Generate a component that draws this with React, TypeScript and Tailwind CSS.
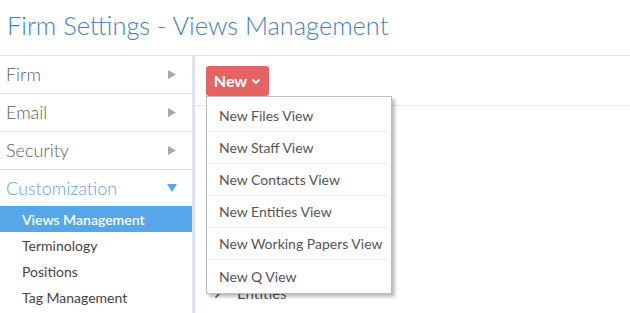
import React from "react";

const font = { fontFamily: "Lato, 'Open Sans', sans-serif" };

function TriRight() {
  return (
    <svg width="8" height="9" viewBox="0 0 8 9" className="shrink-0">
      <path d="M0 0 L8 4.5 L0 9 Z" fill="#a9a9a9" />
    </svg>
  );
}
function TriDown() {
  return (
    <svg width="10" height="8" viewBox="0 0 10 8" className="shrink-0">
      <path d="M0 0 L10 0 L5 8 Z" fill="#5aa7ea" />
    </svg>
  );
}

export default function App() {
  const top = ["Firm", "Email", "Security"];
  const sub = ["Terminology", "Positions", "Tag Management"];
  const menu = [
    "New Files View",
    "New Staff View",
    "New Contacts View",
    "New Entities View",
    "New Working Papers View",
    "New Q View",
  ];
  return (
    <div className="w-[630px] h-[313px] overflow-hidden bg-white flex flex-col" style={font}>
      <div className="h-[56px] shrink-0 border-b border-[#e2e5e9] flex items-center pl-[7px] pb-[4px]">
        <h1 className="text-[25.4px] font-light text-[#3f7fc6] leading-none">
          Firm Settings - Views Management
        </h1>
      </div>
      <div className="flex flex-1 min-h-0">
        <div className="w-[195px] shrink-0 border-r-[3px] border-[#dde4ec] flex flex-col">
          {top.map((t) => (
            <div
              key={t}
              className="h-[38px] border-b border-[#dfe3e8] flex items-center justify-between pl-[6px] pr-[16px]"
            >
              <span className="text-[18px] font-light text-[#5e5e5e]">{t}</span>
              <TriRight />
            </div>
          ))}
          <div className="h-[36px] flex items-center justify-between pl-[6px] pr-[15px]">
            <span className="text-[18px] font-light text-[#5aa3ea]">Customization</span>
            <TriDown />
          </div>
          <div className="h-[26px] bg-[#56a6e8] flex items-center pl-[22px]">
            <span className="text-[14px] font-semibold text-white">Views Management</span>
          </div>
          {sub.map((s) => (
            <div key={s} className="h-[26px] flex items-center pl-[22px]">
              <span className="text-[14px] text-[#444]">{s}</span>
            </div>
          ))}
        </div>
        <div className="flex-1 relative flex flex-col">
          <div className="h-[50px] border-b border-[#e8e8e8] pl-[11px] pt-[10px]">
            <button className="h-[30px] w-[63px] rounded-[3px] bg-[#e46464] text-white font-bold text-[16px] flex items-center justify-center gap-[4px]">
              New
              <svg width="10" height="7" viewBox="0 0 10 7">
                <path d="M1.5 1.5 L5 5 L8.5 1.5" stroke="white" strokeWidth="1.8" fill="none" />
              </svg>
            </button>
          </div>
          <div className="flex flex-col pl-[19px] pt-[172px]">
            <div className="h-[30px] flex items-center gap-[15px] text-[15px] text-[#555]">
              <svg width="8" height="12" viewBox="0 0 8 12">
                <path d="M1.5 1.5 L6 6 L1.5 10.5" stroke="#555" strokeWidth="1.6" fill="none" />
              </svg>
              <span>Entities</span>
            </div>
          </div>
          <div className="absolute left-[11px] top-[40px] w-[186px] bg-white border border-[#bdbdbd] shadow-[3px_3px_3px_rgba(0,0,0,0.25)] pt-[3px] pb-[1px]">
            {menu.map((m, i) => (
              <div key={m} className="px-[3px]">
                <div
                  className={
                    "h-[32px] flex items-center pl-[9px] text-[14px] text-[#555] " +
                    (i < menu.length - 1 ? "border-b border-[#eeeeee]" : "")
                  }
                >
                  {m}
                </div>
              </div>
            ))}
          </div>
        </div>
      </div>
    </div>
  );
}
